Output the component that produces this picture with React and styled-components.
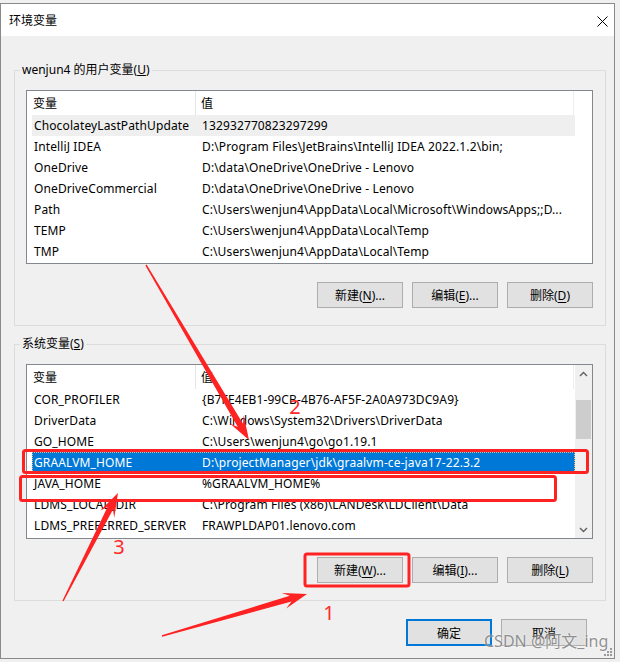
import React from "react";
import styled, { createGlobalStyle } from "styled-components";

const userVars = [
  ["ChocolateyLastPathUpdate", "132932770823297299"],
  ["IntelliJ IDEA", String.raw`D:\Program Files\JetBrains\IntelliJ IDEA 2022.1.2\bin;`],
  ["OneDrive", String.raw`D:\data\OneDrive\OneDrive - Lenovo`],
  ["OneDriveCommercial", String.raw`D:\data\OneDrive\OneDrive - Lenovo`],
  ["Path", String.raw`C:\Users\wenjun4\AppData\Local\Microsoft\WindowsApps;;D...`],
  ["TEMP", String.raw`C:\Users\wenjun4\AppData\Local\Temp`],
  ["TMP", String.raw`C:\Users\wenjun4\AppData\Local\Temp`],
];

const systemVars = [
  ["COR_PROFILER", "{B7FE4EB1-99CB-4B76-AF5F-2A0A973DC9A9}"],
  ["DriverData", String.raw`C:\Windows\System32\Drivers\DriverData`],
  ["GO_HOME", String.raw`C:\Users\wenjun4\go\go1.19.1`],
  ["GRAALVM_HOME", String.raw`D:\projectManager\jdk\graalvm-ce-java17-22.3.2`],
  ["JAVA_HOME", "%GRAALVM_HOME%"],
  ["LDMS_LOCAL_DIR", String.raw`C:\Program Files (x86)\LANDesk\LDClient\Data`],
  ["LDMS_PREFERRED_SERVER", "FRAWPLDAP01.lenovo.com"],
];

const arrowPoints = (x1, y1, x2, y2) => {
  const dx = x2 - x1;
  const dy = y2 - y1;
  const len = Math.hypot(dx, dy);
  const ux = dx / len;
  const uy = dy / len;
  const nx = -uy;
  const ny = ux;
  const pt = (d, w) => `${(x2 - ux * d + nx * w).toFixed(1)},${(y2 - uy * d + ny * w).toFixed(1)}`;
  return [
    pt(len, 0.7),
    pt(17, 3),
    pt(24, 8),
    pt(0, 0),
    pt(24, -8),
    pt(17, -3),
    pt(len, -0.7),
  ].join(" ");
};

const App = () => {
  return (
    <>
      <GlobalStyle />
      <Page>
        <Window>
          <TitleBar>
            <Title>环境变量</Title>
            <Close>
              <svg width="11" height="11" viewBox="0 0 11 11">
                <path d="M0.5 0.5 L10.5 10.5 M10.5 0.5 L0.5 10.5" stroke="#000" strokeWidth="1" />
              </svg>
            </Close>
          </TitleBar>
          <Client>
            <Group $top={26}>
              <Legend>
                wenjun4 的用户变量(<u>U</u>)
              </Legend>
              <ListBox $height={174}>
                <ListContent>
                  <Header>
                    <HeadCell>变量</HeadCell>
                    <HeadCell $last>值</HeadCell>
                  </Header>
                  <Rows>
                    {userVars.map(([name, value], i) => (
                      <Row key={name} $hover={i === 0}>
                        <Cell>{name}</Cell>
                        <Cell>{value}</Cell>
                      </Row>
                    ))}
                  </Rows>
                </ListContent>
                <div />
              </ListBox>
              <ButtonRow>
                <Button>
                  新建(<u>N</u>)...
                </Button>
                <Button>
                  编辑(<u>E</u>)...
                </Button>
                <Button>
                  删除(<u>D</u>)
                </Button>
              </ButtonRow>
            </Group>

            <Group $top={10}>
              <Legend>
                系统变量(<u>S</u>)
              </Legend>
              <ListBox $height={175}>
                <ListContent>
                  <Header>
                    <HeadCell>变量</HeadCell>
                    <HeadCell $last>值</HeadCell>
                  </Header>
                  <Rows>
                    {systemVars.map(([name, value]) => (
                      <Row key={name} $selected={name === "GRAALVM_HOME"}>
                        <Cell>{name}</Cell>
                        <Cell>{value}</Cell>
                      </Row>
                    ))}
                  </Rows>
                </ListContent>
                <ScrollBar>
                  <ScrollArrow>
                    <svg width="9" height="6" viewBox="0 0 9 6">
                      <polyline points="1,5 4.5,1.5 8,5" fill="none" stroke="#606060" strokeWidth="1.4" />
                    </svg>
                  </ScrollArrow>
                  <Track>
                    <Thumb $offset={18} $size={39} />
                  </Track>
                  <ScrollArrow>
                    <svg width="9" height="6" viewBox="0 0 9 6">
                      <polyline points="1,1 4.5,4.5 8,1" fill="none" stroke="#606060" strokeWidth="1.4" />
                    </svg>
                  </ScrollArrow>
                </ScrollBar>
              </ListBox>
              <ButtonRow>
                <Button>
                  新建(<u>W</u>)...
                </Button>
                <Button>
                  编辑(<u>I</u>)...
                </Button>
                <Button>
                  删除(<u>L</u>)
                </Button>
              </ButtonRow>
            </Group>

            <Footer>
              <Button $default $tall>
                确定
              </Button>
              <Button $tall>取消</Button>
            </Footer>
          </Client>
          <Grip>
            <svg width="8" height="8" viewBox="0 0 8 8">
              {[
                [6, 0],
                [6, 3],
                [3, 3],
                [6, 6],
                [3, 6],
                [0, 6],
              ].map(([x, y]) => (
                <rect key={`${x}-${y}`} x={x} y={y} width="2" height="2" fill="#9a9a9a" />
              ))}
            </svg>
          </Grip>
        </Window>

        <Annotations width="620" height="662" viewBox="0 0 620 662">
          <g fill="none" stroke="#ff2222" strokeWidth="3">
            <rect x="23.5" y="450.5" width="564" height="22" rx="2" />
            <rect x="20.5" y="476.5" width="535" height="24" rx="2" />
            <rect x="305" y="554" width="104" height="32" rx="2" />
          </g>
          <g fill="#ff2222">
            <polygon points={arrowPoints(146, 265, 249, 440)} />
            <polygon points={arrowPoints(63, 601, 118, 493)} />
            <polygon points={arrowPoints(162, 636, 307, 594)} />
          </g>
          <g fill="#ff2a2a" fontFamily="'Noto Sans', sans-serif" fontSize="20" textAnchor="middle">
            <text x="295" y="414">2</text>
            <text x="119" y="554">3</text>
            <text x="329" y="620">1</text>
          </g>
        </Annotations>

        <Watermark>CSDN @阿文_ing</Watermark>
      </Page>
    </>
  );
};

const GlobalStyle = createGlobalStyle`
  html, body {
    margin: 0;
    padding: 0;
    background: #f0f0f0;
  }

  body {
    font-family: "Noto Sans", "Noto Sans CJK SC", sans-serif;
    font-size: 12px;
    color: #000;
  }
`;

const Page = styled.div`
  position: relative;
  width: 620px;
  height: 662px;
  overflow: hidden;
  background: #f0f0f0;
  padding-top: 3px;
  box-sizing: border-box;
`;

const Window = styled.div`
  position: relative;
  width: 615px;
  height: 656px;
  box-sizing: border-box;
  border: 1px solid #8a8a8a;
  background: #f0f0f0;
`;

const TitleBar = styled.div`
  display: flex;
  align-items: center;
  justify-content: space-between;
  height: 32px;
  padding-left: 8px;
  background: #fff;
`;

const Title = styled.span`
  font-size: 12px;
  line-height: 16px;
  padding-top: 2px;
`;

const Close = styled.div`
  display: flex;
  align-items: center;
  justify-content: center;
  width: 24px;
  height: 32px;
  padding-top: 2px;
  box-sizing: border-box;
`;

const Client = styled.div`
  padding: 0 8px 0 13px;
`;

const Group = styled.fieldset`
  margin: ${(p) => p.$top}px 0 0;
  padding: 12px 12px 17px 11px;
  border: 1px solid #dcdcdc;
  min-width: 0;
`;

const Legend = styled.legend`
  margin-left: -6px;
  padding: 0 2px;
  font-size: 12px;
  line-height: 16px;
`;

const ListBox = styled.div`
  display: grid;
  grid-template-columns: 1fr 17px;
  height: ${(p) => p.$height}px;
  box-sizing: border-box;
  border: 1px solid #828790;
  background: #fff;
  overflow: hidden;
`;

const ListContent = styled.div`
  min-width: 0;
`;

const Header = styled.div`
  display: grid;
  grid-template-columns: 169px 1fr;
  height: 24px;
  margin-right: 1px;
  border-right: 1px solid #ededed;
`;

const HeadCell = styled.div`
  display: flex;
  align-items: center;
  padding-left: ${(p) => (p.$last ? 5 : 6)}px;
  border-right: ${(p) => (p.$last ? "none" : "1px solid #e5e5e5")};
`;

const Rows = styled.div`
  padding-left: 5px;
`;

const Row = styled.div`
  display: grid;
  grid-template-columns: 168px 1fr;
  height: 21px;
  line-height: 21px;
  background: ${(p) => (p.$selected ? "#0078d7" : p.$hover ? "#efefef" : "transparent")};
  color: ${(p) => (p.$selected ? "#fff" : "#000")};
  outline: ${(p) => (p.$selected ? "1px dotted #f3b27a" : "none")};
  outline-offset: -1px;
`;

const Cell = styled.div`
  padding-left: 2px;
  white-space: nowrap;
  overflow: hidden;
  letter-spacing: 0.12px;
`;

const ScrollBar = styled.div`
  display: flex;
  flex-direction: column;
  background: #f0f0f0;
`;

const ScrollArrow = styled.div`
  display: flex;
  align-items: center;
  justify-content: center;
  height: 17px;
  flex-shrink: 0;
`;

const Track = styled.div`
  flex: 1;
  padding: 18px 1px 0;
`;

const Thumb = styled.div`
  margin-top: ${(p) => p.$offset - 18}px;
  height: ${(p) => p.$size}px;
  background: #cdcdcd;
`;

const ButtonRow = styled.div`
  display: flex;
  justify-content: flex-end;
  gap: 9px;
  margin-top: 18px;
`;

const Button = styled.button`
  width: 86px;
  height: ${(p) => (p.$tall ? 27 : 26)}px;
  padding: 0;
  box-sizing: border-box;
  background: #e1e1e1;
  border: ${(p) => (p.$default ? "2px solid #0078d7" : "1px solid #adadad")};
  font-family: "Noto Sans", "Noto Sans CJK SC", sans-serif;
  font-size: 12px;
  color: #000;

  u {
    text-underline-offset: 2px;
  }
`;

const Footer = styled.div`
  display: flex;
  justify-content: flex-end;
  gap: 9px;
  margin: 18px 19px 0 0;
`;

const Grip = styled.div`
  position: absolute;
  right: 2px;
  bottom: 2px;
  line-height: 0;
`;

const Annotations = styled.svg`
  position: absolute;
  top: 0;
  left: 0;
  pointer-events: none;
`;

const Watermark = styled.div`
  position: absolute;
  left: 484px;
  top: 630px;
  font-family: "Noto Sans", "Noto Sans CJK SC", sans-serif;
  font-size: 16px;
  line-height: 22px;
  color: rgba(110, 110, 110, 0.75);
  text-shadow: 0 0 2px rgba(255, 255, 255, 0.9);
  white-space: nowrap;
`;

export default App;
